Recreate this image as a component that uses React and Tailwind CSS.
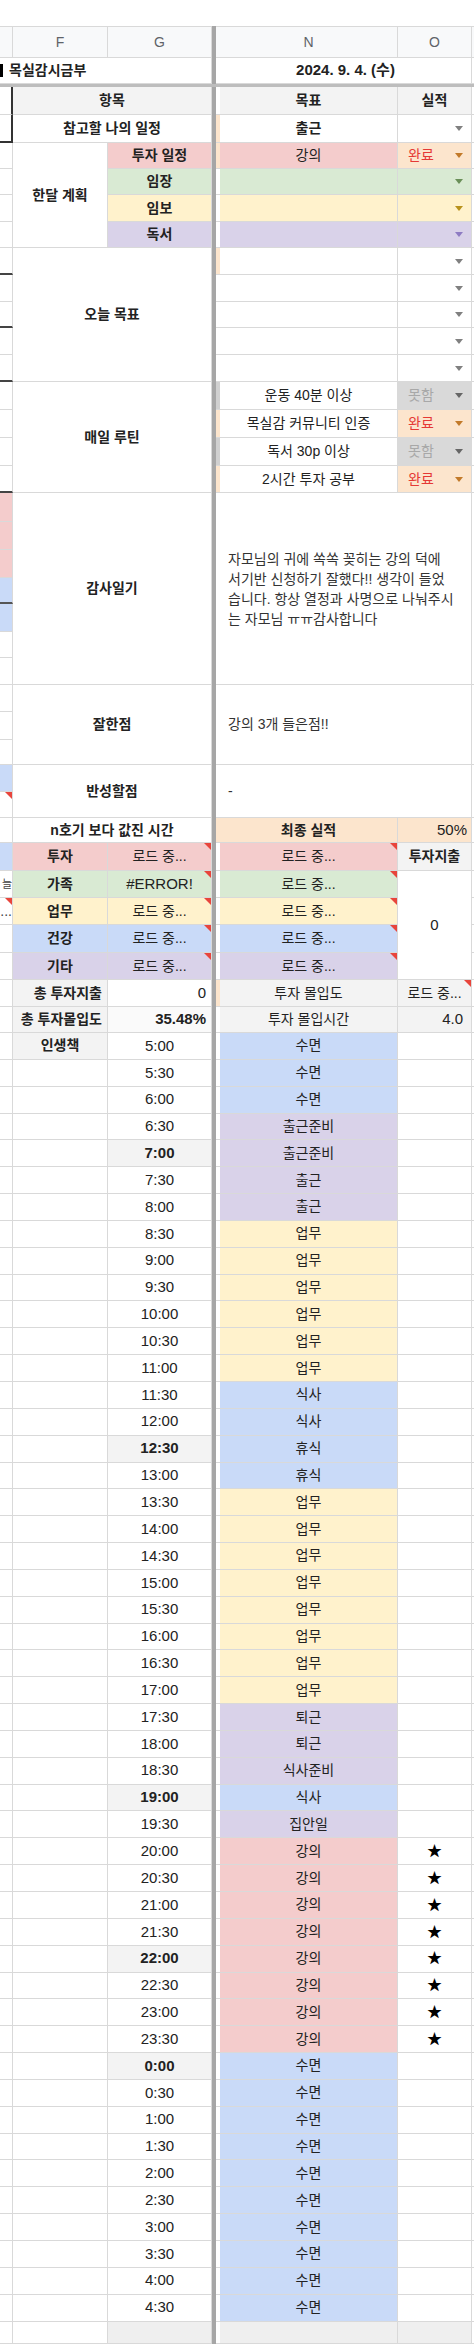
import React from "react";

const PINK = "bg-[#f4cccc]";
const GREEN = "bg-[#d9ead3]";
const YELLOW = "bg-[#fff2cc]";
const BLUE = "bg-[#c9daf8]";
const PURPLE = "bg-[#d9d2e9]";
const PEACH = "bg-[#fce5cd]";
const GRAY = "bg-[#f3f3f3]";

function Cell({ className = "", children, tri = false }) {
  return (
    <div
      className={`relative flex items-center overflow-hidden whitespace-nowrap border-r border-b border-[#d9d9d9] ${className}`}
    >
      {children}
      {tri && (
        <span className="absolute right-0 top-0 h-0 w-0 border-l-[7px] border-t-[7px] border-l-transparent border-t-[#e8453c]" />
      )}
    </div>
  );
}

function Arrow({ c = "border-t-[#808080]" }) {
  return (
    <span
      className={`ml-auto mr-[8px] h-0 w-0 shrink-0 border-x-[4px] border-t-[5px] border-x-transparent ${c}`}
    />
  );
}

const Div = ({ className = "" }) => <div className={`bg-[#a6a6a6] ${className}`} />;
const Gap = ({ className = "bg-white" }) => (
  <div className={`border-b border-[#d9d9d9] ${className}`} />
);
const Edge = ({ className = "" }) => <div className={`border-b border-[#d9d9d9] ${className}`} />;

const hours = [5, 6, 7, 8, 9, 10, 11, 12, 13, 14, 15, 16, 17, 18, 19, 20, 21, 22, 23, 0, 1, 2, 3, 4];
const times = hours.flatMap((h) => [`${h}:00`, `${h}:30`]);
const acts = [
  "수면", "수면", "수면", "출근준비", "출근준비", "출근", "출근", "업무", "업무", "업무",
  "업무", "업무", "업무", "식사", "식사", "휴식", "휴식", "업무", "업무", "업무",
  "업무", "업무", "업무", "업무", "업무", "퇴근", "퇴근", "식사준비", "식사", "집안일",
  "강의", "강의", "강의", "강의", "강의", "강의", "강의", "강의", "수면", "수면",
  "수면", "수면", "수면", "수면", "수면", "수면", "수면", "수면",
];
const boldIdx = [4, 15, 28, 34, 38];
const actColor = {
  수면: BLUE,
  식사: BLUE,
  휴식: BLUE,
  출근준비: PURPLE,
  출근: PURPLE,
  퇴근: PURPLE,
  식사준비: PURPLE,
  집안일: PURPLE,
  업무: YELLOW,
  강의: PINK,
};

function TimeRows() {
  return (
    <div className="grid grid-cols-[13px_95px_104px_4px_4px_178px_74px_2px] grid-rows-[repeat(48,26.854px)_22px]">
      {times.map((t, i) => {
        const bold = boldIdx.includes(i);
        const a = acts[i];
        return (
          <React.Fragment key={t}>
            <Cell />
            {i === 0 ? (
              <Cell className={`justify-center font-bold ${GRAY}`}>인생책</Cell>
            ) : (
              <Cell />
            )}
            <Cell className={`justify-center text-[15px] ${bold ? "font-bold bg-[#f3f3f3]" : ""}`}>{t}</Cell>
            <Div />
            <Gap />
            <Cell className={`justify-center ${actColor[a]}`}>{a}</Cell>
            <Cell className="justify-center text-[15px] text-black">{i >= 30 && i <= 37 ? "★" : ""}</Cell>
            <Edge />
          </React.Fragment>
        );
      })}
      <Cell />
      <Cell />
      <Cell className="bg-[#efefef]" />
      <Div />
      <Gap />
      <Cell className="bg-[#efefef]" />
      <Cell className="bg-[#efefef]" />
      <Edge />
    </div>
  );
}

export default function App() {
  const hd = "border-t bg-[#f8f9fa] justify-center text-[#5f6368]";
  return (
    <div className="w-[474px] bg-white font-['Liberation_Sans','Noto_Sans_CJK_KR',sans-serif] text-[14px] text-[#222]">
      <div className="grid grid-cols-[13px_95px_104px_4px_4px_178px_74px_2px] grid-rows-[26px_32px_26px_3px_28px_28px_26px_26px_27px_26px_27px_27px_26px_27px_27px_28px_28px_28px_27px_29px_28px_28px_26px_28px_26px_27px_27px_28px_25px_27px_26px_25px_28px_27px_27px_28px_27px_27px_26px]">
        {/* r1 blank */}
        <div className="col-span-8 bg-white" />
        {/* r2 column header */}
        <Cell className="border-t bg-[#f8f9fa]" />
        <Cell className={hd}>F</Cell>
        <Cell className={hd}>G</Cell>
        <Div />
        <Gap className="border-t bg-[#f8f9fa]" />
        <Cell className={hd}>N</Cell>
        <Cell className={hd}>O</Cell>
        <Edge className="border-t bg-[#f8f9fa]" />
        {/* r3 title */}
        <Cell className="col-span-3 font-bold">
          <span className="mr-[6px] inline-block h-[13px] w-[3px] bg-black" />
          목실감시금부
        </Cell>
        <Div />
        <Gap />
        <Cell className="col-span-2 justify-center font-bold text-[15px]">2024. 9. 4. (수)</Cell>
        <Edge />
        {/* r4 thick */}
        <div className="col-span-8 bg-[#bdbdbd]" />
        {/* r5 항목 */}
        <Cell className="border-r-2 border-r-[#333]" />
        <Cell className={`col-span-2 justify-center font-bold ${GRAY}`}>항목</Cell>
        <Div />
        <Gap />
        <Cell className={`justify-center font-bold ${GRAY}`}>목표</Cell>
        <Cell className={`justify-center font-bold ${GRAY}`}>실적</Cell>
        <Edge />
        {/* r6 참고할 */}
        <Cell className="border-r-2 border-b-2 border-r-[#333] border-b-[#333]" />
        <Cell className="col-span-2 justify-center font-bold">참고할 나의 일정</Cell>
        <Div />
        <Gap className={PEACH} />
        <Cell className="justify-center font-bold">출근</Cell>
        <Cell>
          <Arrow />
        </Cell>
        <Edge />
        {/* r7 투자 일정 */}
        <Cell />
        <Cell className="row-span-4 justify-center font-bold">한달 계획</Cell>
        <Cell className={`justify-center font-bold ${PINK}`}>투자 일정</Cell>
        <Div />
        <Gap className={PEACH} />
        <Cell className={`justify-center ${PINK}`}>강의</Cell>
        <Cell className={PEACH}>
          <span className="pl-[10px] text-[#e53935]">완료</span>
          <Arrow c="border-t-[#c27a2a]" />
        </Cell>
        <Edge />
        {/* r8 임장 */}
        <Cell />
        <Cell className={`justify-center font-bold ${GREEN}`}>임장</Cell>
        <Div />
        <Gap />
        <Cell className={GREEN} />
        <Cell className={GREEN}>
          <Arrow c="border-t-[#6a8f58]" />
        </Cell>
        <Edge />
        {/* r9 임보 */}
        <Cell />
        <Cell className={`justify-center font-bold ${YELLOW}`}>임보</Cell>
        <Div />
        <Gap />
        <Cell className={YELLOW} />
        <Cell className={YELLOW}>
          <Arrow c="border-t-[#b8921c]" />
        </Cell>
        <Edge />
        {/* r10 독서 */}
        <Cell />
        <Cell className={`justify-center font-bold ${PURPLE}`}>독서</Cell>
        <Div />
        <Gap />
        <Cell className={PURPLE} />
        <Cell className={PURPLE}>
          <Arrow c="border-t-[#8e7cc3]" />
        </Cell>
        <Edge />
        {/* r11-15 오늘 목표 */}
        <Cell className="border-b-2 border-b-[#444]" />
        <Cell className="col-span-2 row-span-5 justify-center font-bold">오늘 목표</Cell>
        <Div />
        <Gap className={PEACH} />
        <Cell />
        <Cell>
          <Arrow />
        </Cell>
        <Edge />
        <Cell />
        <Div />
        <Gap />
        <Cell />
        <Cell>
          <Arrow />
        </Cell>
        <Edge />
        <Cell className="border-b-2 border-b-[#444]" />
        <Div />
        <Gap />
        <Cell />
        <Cell>
          <Arrow />
        </Cell>
        <Edge />
        <Cell />
        <Div />
        <Gap />
        <Cell />
        <Cell>
          <Arrow />
        </Cell>
        <Edge />
        <Cell className="border-b-2 border-b-[#444]" />
        <Div />
        <Gap />
        <Cell />
        <Cell>
          <Arrow />
        </Cell>
        <Edge />
        {/* r16-19 매일 루틴 */}
        <Cell />
        <Cell className="col-span-2 row-span-4 justify-center font-bold">매일 루틴</Cell>
        <Div />
        <Gap className="bg-[#d0d0d0]" />
        <Cell className="justify-center">운동 40분 이상</Cell>
        <Cell className="bg-[#d9d9d9]">
          <span className="pl-[10px] text-[#a8a8a8]">못함</span>
          <Arrow c="border-t-[#666]" />
        </Cell>
        <Edge />
        <Cell />
        <Div />
        <Gap className={PEACH} />
        <Cell className="justify-center">목실감 커뮤니티 인증</Cell>
        <Cell className={PEACH}>
          <span className="pl-[10px] text-[#e53935]">완료</span>
          <Arrow c="border-t-[#c27a2a]" />
        </Cell>
        <Edge />
        <Cell />
        <Div />
        <Gap className="bg-[#d0d0d0]" />
        <Cell className="justify-center">독서 30p 이상</Cell>
        <Cell className="bg-[#d9d9d9]">
          <span className="pl-[10px] text-[#a8a8a8]">못함</span>
          <Arrow c="border-t-[#666]" />
        </Cell>
        <Edge />
        <Cell className="border-b-2 border-b-[#444]" />
        <Div />
        <Gap className={PEACH} />
        <Cell className="justify-center">2시간 투자 공부</Cell>
        <Cell className={PEACH}>
          <span className="pl-[10px] text-[#e53935]">완료</span>
          <Arrow c="border-t-[#c27a2a]" />
        </Cell>
        <Edge />
        {/* r20-26 감사일기 */}
        <Cell className={PINK} />
        <Cell className="col-span-2 row-span-7 justify-center font-bold">감사일기</Cell>
        <Div className="row-span-7" />
        <Gap className="row-span-7 bg-white" />
        <Cell className="col-span-2 row-span-7 pl-[8px] leading-[20px] text-[#333]">
          <div>
            자모님의 귀에 쏙쏙 꽂히는 강의 덕에
            <br />
            서기반 신청하기 잘했다!! 생각이 들었
            <br />
            습니다. 항상 열정과 사명으로 나눠주시
            <br />는 자모님 ㅠㅠ감사합니다
          </div>
        </Cell>
        <Edge className="row-span-7" />
        <Cell className={PINK} />
        <Cell className={PINK} />
        <Cell className={`${BLUE} border-b-2 border-b-[#555]`} />
        <Cell className={BLUE} />
        <Cell />
        <Cell />
        {/* r27-29 잘한점 */}
        <Cell />
        <Cell className="col-span-2 row-span-3 justify-center font-bold">잘한점</Cell>
        <Div className="row-span-3" />
        <Gap className="row-span-3 bg-white" />
        <Cell className="col-span-2 row-span-3 pl-[8px] text-[#333]">강의 3개 들은점!!</Cell>
        <Edge className="row-span-3" />
        <Cell />
        <Cell />
        {/* r30-31 반성할점 */}
        <Cell className={BLUE} />
        <Cell className="col-span-2 row-span-2 justify-center font-bold">반성할점</Cell>
        <Div className="row-span-2" />
        <Gap className="row-span-2 bg-white" />
        <Cell className="col-span-2 row-span-2 pl-[8px] text-[#333]">-</Cell>
        <Edge className="row-span-2" />
        <Cell tri />
        {/* r32 n호기 */}
        <Cell />
        <Cell className="col-span-2 justify-center font-bold">n호기 보다 값진 시간</Cell>
        <Div />
        <Gap className={PEACH} />
        <Cell className={`justify-center font-bold ${PEACH}`}>최종 실적</Cell>
        <Cell className={`justify-end pr-[4px] text-[15px] ${PEACH}`}>50%</Cell>
        <Edge />
        {/* r33 투자 */}
        <Cell className={BLUE} />
        <Cell className={`justify-center font-bold ${PINK}`}>투자</Cell>
        <Cell tri className={`justify-center ${PINK}`}>로드 중...</Cell>
        <Div />
        <Gap />
        <Cell tri className={`justify-center ${PINK}`}>로드 중...</Cell>
        <Cell className={`justify-center font-bold ${GRAY}`}>투자지출</Cell>
        <Edge />
        {/* r34 가족 */}
        <Cell className="justify-end text-[11px] text-[#444]">
          <span>늘</span>
        </Cell>
        <Cell className={`justify-center font-bold ${GREEN}`}>가족</Cell>
        <Cell tri className={`justify-center text-[15px] ${GREEN}`}>#ERROR!</Cell>
        <Div />
        <Gap />
        <Cell tri className={`justify-center ${GREEN}`}>로드 중...</Cell>
        <Cell className="row-span-4 justify-center text-[15px]">0</Cell>
        <Edge />
        {/* r35 업무 */}
        <Cell tri className="justify-end text-[#444]">
          <span>...</span>
        </Cell>
        <Cell className={`justify-center font-bold ${YELLOW}`}>업무</Cell>
        <Cell tri className={`justify-center ${YELLOW}`}>로드 중...</Cell>
        <Div />
        <Gap />
        <Cell tri className={`justify-center ${YELLOW}`}>로드 중...</Cell>
        <Edge />
        {/* r36 건강 */}
        <Cell />
        <Cell className={`justify-center font-bold ${BLUE}`}>건강</Cell>
        <Cell tri className={`justify-center ${BLUE}`}>로드 중...</Cell>
        <Div />
        <Gap />
        <Cell tri className={`justify-center ${BLUE}`}>로드 중...</Cell>
        <Edge />
        {/* r37 기타 */}
        <Cell />
        <Cell className={`justify-center font-bold ${PURPLE}`}>기타</Cell>
        <Cell tri className={`justify-center ${PURPLE}`}>로드 중...</Cell>
        <Div />
        <Gap />
        <Cell tri className={`justify-center ${PURPLE}`}>로드 중...</Cell>
        <Edge />
        {/* r38 총 투자지출 */}
        <Cell />
        <Cell className={`justify-end pr-[5px] font-bold ${GRAY}`}>총 투자지출</Cell>
        <Cell className="justify-end pr-[5px] text-[15px]">0</Cell>
        <Div />
        <Gap className={PEACH} />
        <Cell className={`justify-center ${GRAY}`}>투자 몰입도</Cell>
        <Cell tri className={`justify-center ${GRAY}`}>로드 중...</Cell>
        <Edge />
        {/* r39 총 투자몰입도 */}
        <Cell />
        <Cell className={`justify-end pr-[5px] font-bold ${GRAY}`}>총 투자몰입도</Cell>
        <Cell className="justify-end pr-[5px] text-[15px] font-bold bg-[#fafafa]">35.48%</Cell>
        <Div />
        <Gap />
        <Cell className={`justify-center ${GRAY}`}>투자 몰입시간</Cell>
        <Cell className={`justify-end pr-[8px] text-[15px] ${GRAY}`}>4.0</Cell>
        <Edge />
      </div>
      <TimeRows />
    </div>
  );
}
